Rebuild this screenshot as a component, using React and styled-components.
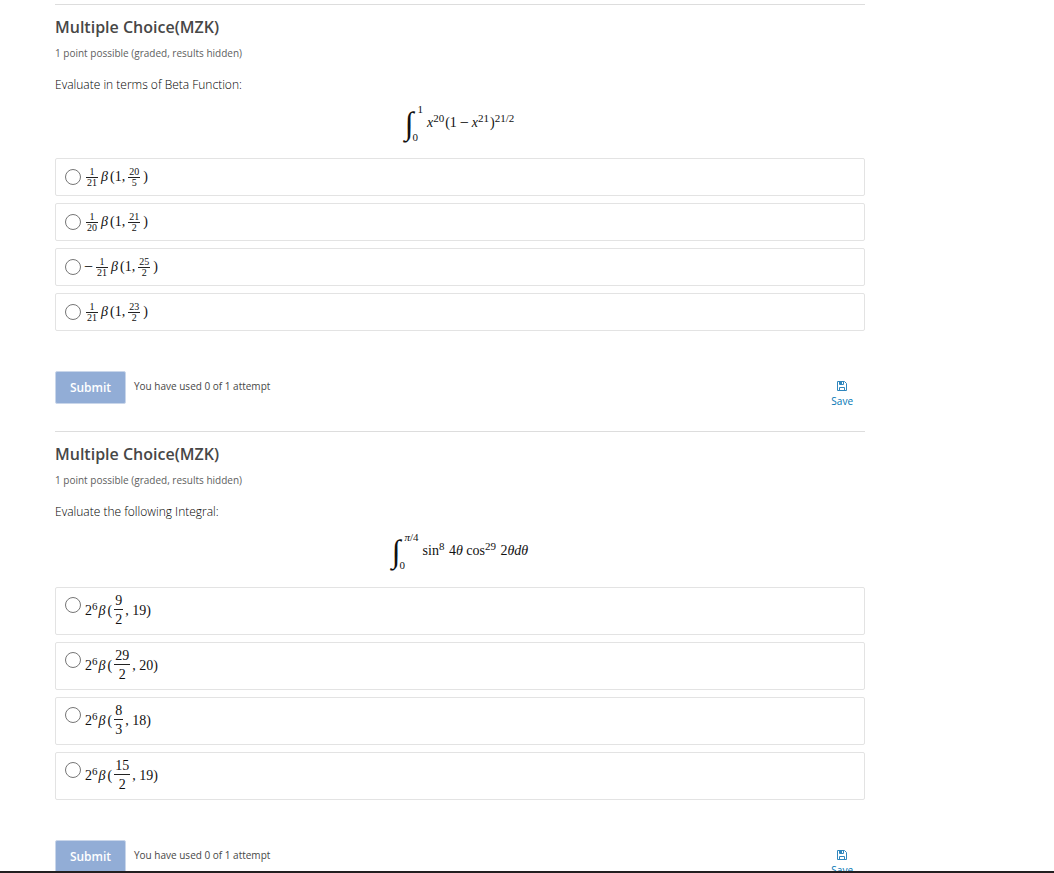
import React from "react";
import styled, { createGlobalStyle } from "styled-components";

const GlobalStyle = createGlobalStyle`
  * { box-sizing: border-box; }
  body {
    margin: 0;
    background: #fff;
    color: #313131;
    font: 12px/20px "Open Sans", "Noto Sans", sans-serif;
  }
`;

const Shell = styled.div`
  height: 100vh;
  display: flex;
  flex-direction: column;
`;
const Content = styled.main`
  flex: 1;
  min-height: 0;
  overflow: hidden;
  padding: 4px 189px 0 55px;
`;
const BottomEdge = styled.div`
  height: 2px;
  flex: none;
  background: #231f20;
`;

const Problem = styled.form`
  border-top: 1px solid #ddd;
  padding: 12px 0 22px;
`;
const Title = styled.h3`
  margin: 0;
  font-size: 16px;
  line-height: 20px;
  font-weight: 600;
  color: #474747;
`;
const Progress = styled.p`
  margin: 6px 0 0;
  font-size: 10px;
  line-height: 20px;
  color: #5e5e5e;
`;
const Prompt = styled.p`
  margin: 12px 0 0;
  font-weight: 300;
  color: #000;
`;

const Math = styled.span`
  display: inline-flex;
  align-items: center;
  font-family: "Liberation Serif", serif;
  font-size: 14px;
  line-height: 16px;
  color: #111;
  white-space: pre;
`;
const Display = styled.div`
  display: flex;
  justify-content: center;
  align-items: center;
  height: ${(p) => (p.$large ? "57px" : "55px")};
  margin-bottom: 8px;
`;
const Sup = styled.sup`
  margin: 0 1px 10px 0;
  font-size: 11px;
  line-height: 10px;
`;
const Var = styled.i`
  margin-right: ${(p) => (p.$spaced ? "2px" : "0")};
`;
const Operator = styled.span`
  margin: ${(p) => (p.$unary ? "0 1px 0 0" : "0 3px")};
  font-size: 16px;
`;
const Comma = styled.span`
  margin-right: 1px;
`;
const IntegralSign = styled.span`
  font-size: 32px;
  line-height: 34px;
  font-style: italic;
`;
const Limits = styled.span`
  display: flex;
  flex-direction: column;
  justify-content: space-between;
  height: 38px;
  margin: 0 4px 0 -1px;
  font-size: 11px;
  line-height: 10px;
`;
const Upper = styled.span`
  padding-left: 5px;
`;
const Fraction = styled.span`
  display: inline-flex;
  flex-direction: column;
  align-items: stretch;
  text-align: center;
  margin: ${(p) => (p.$large ? "0 2px" : "0 3px 0 2px")};
  font-size: ${(p) => (p.$large ? "14px" : "10px")};
  line-height: ${(p) => (p.$large ? "16px" : "10px")};
`;
const Numerator = styled.span`
  border-bottom: 1px solid #222;
  padding: 0 1px;
`;
const Denominator = styled.span`
  padding: ${(p) => (p.$large ? "2px" : "0")} 1px 0;
`;

const Choices = styled.fieldset`
  border: 0;
  margin: 0;
  padding: 0;
  min-width: 0;
  display: grid;
  gap: 7px;
`;
const Choice = styled.label`
  display: flex;
  align-items: ${(p) => (p.$large ? "flex-start" : "center")};
  gap: ${(p) => (p.$large ? "4px" : "3px")};
  height: ${(p) => (p.$large ? "48px" : "38px")};
  padding: ${(p) => (p.$large ? "5px" : "0")} 9px 0;
  border: 1px solid #e3e3e3;
  border-radius: 2px;
`;
const Radio = styled.input`
  appearance: none;
  flex: none;
  width: 16px;
  height: 16px;
  margin: ${(p) => (p.$large ? "4px" : "0")} 0 0;
  border: 1px solid #767676;
  border-radius: 50%;
  background: #fff;
`;

const Actions = styled.div`
  display: flex;
  align-items: flex-start;
  margin-top: 40px;
`;
const Submit = styled.button`
  width: 71px;
  height: 33px;
  padding: 1px 0 0;
  border: 1px solid #c9d6ea;
  border-radius: 2px;
  background: #92add6;
  color: #fff;
  font: 600 12px/20px "Open Sans", sans-serif;
`;
const Attempts = styled.span`
  margin: 5px auto 0 8px;
  font-size: 10px;
  color: #474747;
`;
const Save = styled.button`
  display: flex;
  flex-direction: column;
  align-items: center;
  gap: 2px;
  margin-right: 12px;
  padding: 10px 0 0;
  border: 0;
  background: none;
  color: #0075b4;
  font: 10px/16px "Open Sans", sans-serif;
`;

const SaveIcon = () => (
  <svg width="10" height="10" viewBox="0 0 10 10" fill="none" stroke="#2f86bd" aria-hidden="true">
    <path d="M.5.5h7l2 2v7h-9z" />
    <path d="M2.5 9.500V6.500h5v3M2.500.500v3h4v-3" />
    <path d="M3 1h2v2h-2z" fill="#2f86bd" stroke="none" />
  </svg>
);

const Frac = ({ top, bottom, large }) => (
  <Fraction $large={large}>
    <Numerator>{top}</Numerator>
    <Denominator $large={large}>{bottom}</Denominator>
  </Fraction>
);

const Integral = ({ from, to }) => (
  <>
    <IntegralSign>∫</IntegralSign>
    <Limits>
      <Upper>{to}</Upper>
      <span>{from}</span>
    </Limits>
  </>
);

const ProblemBlock = ({ id, prompt, formula, large, choices }) => (
  <Problem onSubmit={(e) => e.preventDefault()}>
    <Title>Multiple Choice(MZK)</Title>
    <Progress>1 point possible (graded, results hidden)</Progress>
    <Prompt id={`${id}-prompt`}>{prompt}</Prompt>
    <Display $large={large}>
      <Math>{formula}</Math>
    </Display>
    <Choices aria-labelledby={`${id}-prompt`}>
      {choices.map((choice, i) => (
        <Choice key={i} htmlFor={`${id}-${i}`} $large={large}>
          <Radio type="radio" name={id} id={`${id}-${i}`} $large={large} />
          <Math>{choice}</Math>
        </Choice>
      ))}
    </Choices>
    <Actions>
      <Submit type="submit">Submit</Submit>
      <Attempts>You have used 0 of 1 attempt</Attempts>
      <Save type="button">
        <SaveIcon />
        Save
      </Save>
    </Actions>
  </Problem>
);

const smallChoice = (sign, coefficient, top, bottom) => (
  <>
    {sign && <Operator $unary>{sign}</Operator>}
    <Frac top="1" bottom={coefficient} />
    <Var $spaced>β</Var>
    (1<Comma>,</Comma>
    <Frac top={top} bottom={bottom} />
    {")"}
  </>
);
const largeChoice = (top, bottom, last) => (
  <>
    2<Sup>6</Sup>
    <Var $spaced>β</Var>
    {"("}
    <Frac large top={top} bottom={bottom} />
    {`, ${last})`}
  </>
);

export default function App() {
  return (
    <>
      <GlobalStyle />
      <Shell>
        <Content>
          <ProblemBlock
            id="beta"
            prompt="Evaluate in terms of Beta Function:"
            formula={
              <>
                <Integral from="0" to="1" />
                <Var>x</Var>
                <Sup>20</Sup>
                {"(1"}
                <Operator>−</Operator>
                <Var>x</Var>
                <Sup>21</Sup>
                {")"}
                <Sup>21/2</Sup>
              </>
            }
            choices={[
              smallChoice("", "21", "20", "5"),
              smallChoice("", "20", "21", "2"),
              smallChoice("−", "21", "25", "2"),
              smallChoice("", "21", "23", "2"),
            ]}
          />
          <ProblemBlock
            id="integral"
            large
            prompt="Evaluate the following Integral:"
            formula={
              <>
                <Integral from="0" to={<><Var>π</Var>/4</>} />
                sin<Sup>8</Sup>
                {" 4"}
                <Var>θ</Var>
                {" cos"}
                <Sup>29</Sup>
                {" 2"}
                <Var>θdθ</Var>
              </>
            }
            choices={[
              largeChoice("9", "2", "19"),
              largeChoice("29", "2", "20"),
              largeChoice("8", "3", "18"),
              largeChoice("15", "2", "19"),
            ]}
          />
        </Content>
        <BottomEdge />
      </Shell>
    </>
  );
}
